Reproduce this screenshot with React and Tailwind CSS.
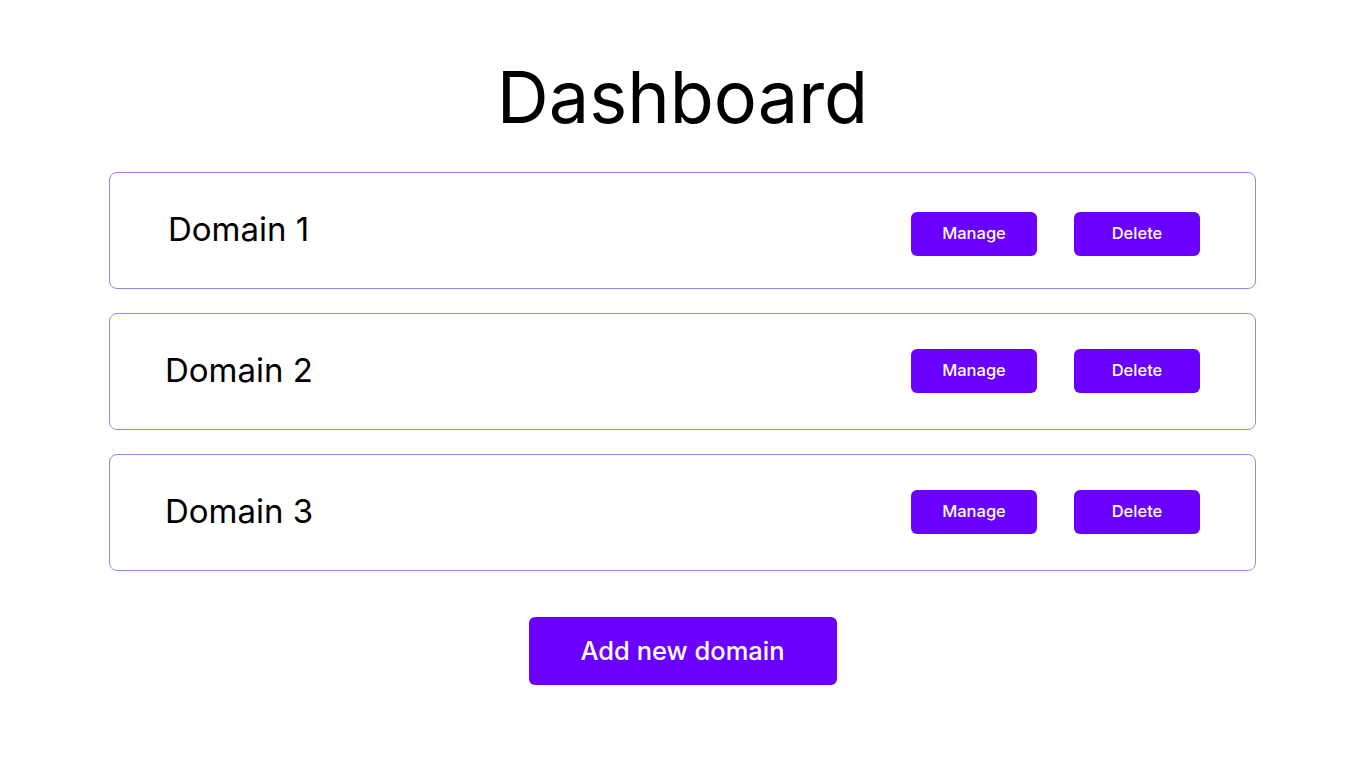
export default function App() {
  const domains = [
    { name: "Domain 1", pl: "pl-[58px]", tm: "mb-[4px]", bm: "mt-[6px]" },
    { name: "Domain 2", pl: "pl-[55px]", tm: "mb-[3px]", bm: "mb-[2px]" },
    { name: "Domain 3", pl: "pl-[55px]", tm: "mb-[3px]", bm: "mb-[2px]" },
  ];
  return (
    <div className="min-h-screen bg-white flex flex-col items-center" style={{ fontFamily: "Inter, sans-serif" }}>
      <h1 className="mt-[52px] text-[72px] leading-[90px] text-black font-normal">Dashboard</h1>
      <div className="mt-[30px] w-[1147px] flex flex-col gap-[24px]">
        {domains.map((d) => (
          <div key={d.name} className="h-[117px] border border-[#a07ef5] rounded-[8px] flex items-center justify-between pr-[55px]">
            <span className={`${d.pl} ${d.tm} text-[33px] leading-[40px] text-black`}>{d.name}</span>
            <div className={`${d.bm} flex gap-[37px]`}>
              <button className="w-[126px] h-[44px] rounded-[6px] bg-[#6a00ff] text-white text-[16.5px] font-medium">Manage</button>
              <button className="w-[126px] h-[44px] rounded-[6px] bg-[#6a00ff] text-white text-[16.5px] font-medium">Delete</button>
            </div>
          </div>
        ))}
      </div>
      <button className="mt-[46px] w-[308px] h-[68px] rounded-[6px] bg-[#6a00ff] text-white text-[25.5px] font-medium">Add new domain</button>
    </div>
  );
}
